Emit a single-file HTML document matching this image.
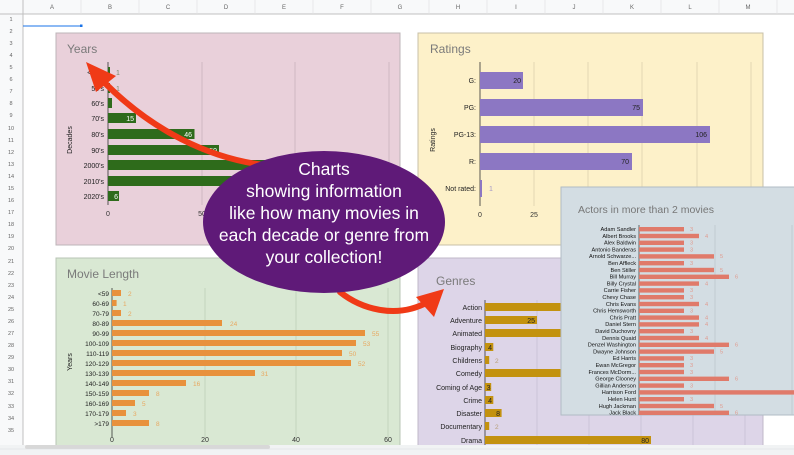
<!DOCTYPE html>
<html><head><meta charset="utf-8"><style>
html,body{margin:0;padding:0;width:794px;height:455px;overflow:hidden;background:#fff}
svg{display:block;font-family:"Liberation Sans",sans-serif}
</style></head><body>
<svg width="794" height="455" viewBox="0 0 794 455">
<rect x="0" y="0" width="794" height="14" fill="#f8f9fa"/>
<rect x="0" y="0" width="23" height="455" fill="#f8f9fa"/>
<line x1="0" y1="14" x2="794" y2="14" stroke="#c0c0c0" stroke-width="1"/>
<line x1="23" y1="0" x2="23" y2="455" stroke="#c0c0c0" stroke-width="1"/>
<g stroke="#e2e2e2" stroke-width="0.7">
<line x1="81" y1="0" x2="81" y2="14"/><line x1="139" y1="0" x2="139" y2="14"/><line x1="197" y1="0" x2="197" y2="14"/><line x1="255" y1="0" x2="255" y2="14"/><line x1="313" y1="0" x2="313" y2="14"/><line x1="371" y1="0" x2="371" y2="14"/><line x1="429" y1="0" x2="429" y2="14"/><line x1="487" y1="0" x2="487" y2="14"/><line x1="545" y1="0" x2="545" y2="14"/><line x1="603" y1="0" x2="603" y2="14"/><line x1="661" y1="0" x2="661" y2="14"/><line x1="719" y1="0" x2="719" y2="14"/><line x1="777" y1="0" x2="777" y2="14"/>
</g>
<g font-size="6" fill="#666" text-anchor="middle">
<text x="52" y="9">A</text><text x="110" y="9">B</text><text x="168" y="9">C</text><text x="226" y="9">D</text><text x="284" y="9">E</text><text x="342" y="9">F</text><text x="400" y="9">G</text><text x="458" y="9">H</text><text x="516" y="9">I</text><text x="574" y="9">J</text><text x="632" y="9">K</text><text x="690" y="9">L</text><text x="748" y="9">M</text>
</g>
<line x1="23" y1="26" x2="81" y2="26" stroke="#1a73e8" stroke-width="1"/>
<rect x="80" y="24.5" width="2.5" height="2.5" fill="#1a73e8"/>
<g font-size="5.5" fill="#666" text-anchor="middle">
<text x="11" y="21">1</text><text x="11" y="33">2</text><text x="11" y="45">3</text><text x="11" y="57">4</text><text x="11" y="69">5</text><text x="11" y="81">6</text><text x="11" y="93">7</text><text x="11" y="105">8</text><text x="11" y="117">9</text><text x="11" y="130">10</text><text x="11" y="142">11</text><text x="11" y="154">12</text><text x="11" y="166">13</text><text x="11" y="178">14</text><text x="11" y="190">15</text><text x="11" y="202">16</text><text x="11" y="214">17</text><text x="11" y="226">18</text><text x="11" y="238">19</text><text x="11" y="250">20</text><text x="11" y="263">21</text><text x="11" y="275">22</text><text x="11" y="287">23</text><text x="11" y="299">24</text><text x="11" y="311">25</text><text x="11" y="323">26</text><text x="11" y="335">27</text><text x="11" y="347">28</text><text x="11" y="359">29</text><text x="11" y="371">30</text><text x="11" y="383">31</text><text x="11" y="395">32</text><text x="11" y="408">33</text><text x="11" y="420">34</text><text x="11" y="432">35</text>
</g>

<!-- Years -->
<rect x="56" y="33" width="344" height="212" fill="#e9d0da" stroke="#bdb4b8"/>
<text x="67" y="53" font-size="12" fill="#7a7a7a">Years</text>
<g stroke="#c9b3bd" stroke-width="0.8"><line x1="202" y1="62" x2="202" y2="205"/><line x1="295" y1="62" x2="295" y2="205"/><line x1="389" y1="62" x2="389" y2="205"/></g>
<line x1="108" y1="62" x2="108" y2="205" stroke="#333" stroke-width="0.8"/>
<g fill="#2e6b1b">
<rect x="108" y="67" width="2" height="10"/><rect x="108" y="83" width="2" height="10"/><rect x="108" y="98" width="4" height="10"/><rect x="108" y="113" width="28" height="10"/><rect x="108" y="129" width="86.5" height="10"/><rect x="108" y="145" width="111" height="10"/><rect x="108" y="160" width="170" height="10"/><rect x="108" y="176" width="160" height="10"/><rect x="108" y="191" width="11" height="10"/>
</g>
<g font-size="7" fill="#222" text-anchor="end">
<text x="104" y="75">&lt;50's</text><text x="104" y="91">50's</text><text x="104" y="106">60's</text><text x="104" y="121">70's</text><text x="104" y="137">80's</text><text x="104" y="153">90's</text><text x="104" y="168">2000's</text><text x="104" y="184">2010's</text><text x="104" y="199">2020's</text>
</g>
<g font-size="7" fill="#fff" text-anchor="end"><text x="134" y="121">15</text><text x="192" y="137">46</text><text x="217" y="153">59</text><text x="118" y="199">6</text></g>
<g font-size="7" fill="#7a8c6a"><text x="116" y="75">1</text><text x="116" y="91">1</text></g>
<text transform="translate(72,140) rotate(-90)" font-size="7" fill="#222" text-anchor="middle">Decades</text>
<g font-size="7" fill="#333" text-anchor="middle"><text x="108" y="216">0</text><text x="202" y="216">50</text></g>

<!-- Ratings -->
<rect x="418" y="33" width="345" height="212" fill="#fdf1c9" stroke="#c8c0a8"/>
<text x="430" y="53" font-size="12" fill="#7a7a7a">Ratings</text>
<g stroke="#ddd2ae" stroke-width="0.8"><line x1="534" y1="62" x2="534" y2="206"/><line x1="588" y1="62" x2="588" y2="206"/><line x1="642" y1="62" x2="642" y2="206"/><line x1="697" y1="62" x2="697" y2="206"/><line x1="751" y1="62" x2="751" y2="206"/></g>
<line x1="480" y1="62" x2="480" y2="206" stroke="#333" stroke-width="0.8"/>
<g fill="#8c77c3">
<rect x="480" y="72" width="43" height="17"/><rect x="480" y="99" width="163" height="17"/><rect x="480" y="126" width="230" height="17"/><rect x="480" y="153" width="152" height="17"/><rect x="480" y="180" width="2" height="17"/>
</g>
<g font-size="7" fill="#222" text-anchor="end">
<text x="476" y="83">G:</text><text x="476" y="110">PG:</text><text x="476" y="137">PG-13:</text><text x="476" y="164">R:</text><text x="476" y="191">Not rated:</text>
<text x="521" y="83">20</text><text x="640" y="110">75</text><text x="707" y="137">106</text><text x="629" y="164">70</text>
</g>
<text x="489" y="191" font-size="7" fill="#a69ac8">1</text>
<text transform="translate(435,140) rotate(-90)" font-size="7" fill="#222" text-anchor="middle">Ratings</text>
<g font-size="7" fill="#333" text-anchor="middle"><text x="480" y="217">0</text><text x="534" y="217">25</text></g>

<!-- Movie Length -->
<rect x="56" y="258" width="344" height="190" fill="#d9e8d3" stroke="#b8c4b4"/>
<text x="67" y="278" font-size="12" fill="#7a7a7a">Movie Length</text>
<g stroke="#bfd0b8" stroke-width="0.8"><line x1="205" y1="288" x2="205" y2="437"/><line x1="296" y1="288" x2="296" y2="437"/><line x1="388" y1="288" x2="388" y2="437"/></g>
<line x1="112" y1="288" x2="112" y2="437" stroke="#333" stroke-width="0.8"/>
<g fill="#e8913c">
<rect x="112" y="290" width="9" height="6"/><rect x="112" y="300" width="4.6" height="6"/><rect x="112" y="310" width="9" height="6"/><rect x="112" y="320" width="110" height="6"/><rect x="112" y="330" width="253" height="6"/><rect x="112" y="340" width="244" height="6"/><rect x="112" y="350" width="230" height="6"/><rect x="112" y="360" width="239" height="6"/><rect x="112" y="370" width="143" height="6"/><rect x="112" y="380" width="74" height="6"/><rect x="112" y="390" width="37" height="6"/><rect x="112" y="400" width="23" height="6"/><rect x="112" y="410" width="14" height="6"/><rect x="112" y="420" width="37" height="6"/>
</g>
<g font-size="6.5" fill="#222" text-anchor="end">
<text x="109" y="296">&lt;59</text><text x="109" y="306">60-69</text><text x="109" y="316">70-79</text><text x="109" y="326">80-89</text><text x="109" y="336">90-99</text><text x="109" y="346">100-109</text><text x="109" y="356">110-119</text><text x="109" y="366">120-129</text><text x="109" y="376">130-139</text><text x="109" y="386">140-149</text><text x="109" y="396">150-159</text><text x="109" y="406">160-169</text><text x="109" y="416">170-179</text><text x="109" y="426">&gt;179</text>
</g>
<g font-size="6.5" fill="#e8a860">
<text x="128" y="296">2</text><text x="123" y="306">1</text><text x="128" y="316">2</text><text x="230" y="326">24</text><text x="372" y="336">55</text><text x="363" y="346">53</text><text x="349" y="356">50</text><text x="358" y="366">52</text><text x="261" y="376">31</text><text x="193" y="386">16</text><text x="156" y="396">8</text><text x="142" y="406">5</text><text x="133" y="416">3</text><text x="156" y="426">8</text>
</g>
<text transform="translate(72,362) rotate(-90)" font-size="7" fill="#222" text-anchor="middle">Years</text>
<g font-size="7" fill="#333" text-anchor="middle"><text x="112" y="442">0</text><text x="205" y="442">20</text><text x="296" y="442">40</text><text x="388" y="442">60</text></g>

<!-- Genres -->
<rect x="418" y="258" width="345" height="190" fill="#ddd5e8" stroke="#c0b8c8"/>
<text x="436" y="285" font-size="12" fill="#7a7a7a">Genres</text>
<g stroke="#c8c0d4" stroke-width="0.8"><line x1="537" y1="300" x2="537" y2="448"/><line x1="589" y1="300" x2="589" y2="448"/><line x1="641" y1="300" x2="641" y2="448"/><line x1="693" y1="300" x2="693" y2="448"/><line x1="745" y1="300" x2="745" y2="448"/></g>
<line x1="485" y1="300" x2="485" y2="448" stroke="#333" stroke-width="0.8"/>
<g fill="#c3920f">
<rect x="485" y="303" width="90" height="8"/><rect x="485" y="316" width="52" height="8"/><rect x="485" y="329" width="90" height="8"/><rect x="485" y="343" width="8.3" height="8"/><rect x="485" y="356" width="4.2" height="8"/><rect x="485" y="369" width="90" height="8"/><rect x="485" y="383" width="6.2" height="8"/><rect x="485" y="396" width="8.3" height="8"/><rect x="485" y="409" width="16.6" height="8"/><rect x="485" y="422" width="4.2" height="8"/><rect x="485" y="436" width="166" height="8"/>
</g>
<g font-size="7" fill="#222" text-anchor="end">
<text x="482" y="310">Action</text><text x="482" y="323">Adventure</text><text x="482" y="336">Animated</text><text x="482" y="350">Biography</text><text x="482" y="363">Childrens</text><text x="482" y="376">Comedy</text><text x="482" y="390">Coming of Age</text><text x="482" y="403">Crime</text><text x="482" y="416">Disaster</text><text x="482" y="429">Documentary</text><text x="482" y="443">Drama</text>
<text x="535" y="323">25</text><text x="492" y="350">4</text><text x="490.5" y="390">3</text><text x="492" y="403">4</text><text x="500" y="416">8</text><text x="649" y="443">80</text>
</g>
<g font-size="6.5" fill="#b8a07a"><text x="495" y="363">2</text><text x="495" y="429">2</text></g>

<!-- Actors -->
<rect x="561" y="187" width="240" height="228" fill="#d3dde3" stroke="#b0bcc4"/>
<text x="578" y="213" font-size="10.5" fill="#777">Actors in more than 2 movies</text>
<g stroke="#bcc8ce" stroke-width="0.8"><line x1="715" y1="225" x2="715" y2="415"/><line x1="792" y1="225" x2="792" y2="415"/></g>
<line x1="639" y1="225" x2="639" y2="415" stroke="#333" stroke-width="0.7"/>
<g font-size="5.6" fill="#111" text-anchor="end">
<text x="636" y="231">Adam Sandler</text><text x="636" y="237.8">Albert Brooks</text><text x="636" y="244.6">Alex Baldwin</text><text x="636" y="251.4">Antonio Banderas</text><text x="636" y="258.2">Arnold Schwarze...</text><text x="636" y="265">Ben Affleck</text><text x="636" y="271.8">Ben Stiller</text><text x="636" y="278.6">Bill Murray</text><text x="636" y="285.4">Billy Crystal</text><text x="636" y="292.2">Carrie Fisher</text><text x="636" y="299">Chevy Chase</text><text x="636" y="305.8">Chris Evans</text><text x="636" y="312.6">Chris Hemsworth</text><text x="636" y="319.4">Chris Pratt</text><text x="636" y="326.2">Daniel Stern</text><text x="636" y="333">David Duchovny</text><text x="636" y="339.8">Dennis Quaid</text><text x="636" y="346.6">Denzel Washington</text><text x="636" y="353.4">Dwayne Johnson</text><text x="636" y="360.2">Ed Harris</text><text x="636" y="367">Ewan McGregor</text><text x="636" y="373.8">Frances McDorm...</text><text x="636" y="380.6">George Clooney</text><text x="636" y="387.4">Gillian Anderson</text><text x="636" y="394.2">Harrison Ford</text><text x="636" y="401">Helen Hunt</text><text x="636" y="407.8">Hugh Jackman</text><text x="636" y="414.6">Jack Black</text>
</g>
<g fill="#e07a6a">
<rect x="639" y="227" width="45" height="4.4"/><rect x="639" y="233.8" width="60" height="4.4"/><rect x="639" y="240.6" width="45" height="4.4"/><rect x="639" y="247.4" width="45" height="4.4"/><rect x="639" y="254.2" width="75" height="4.4"/><rect x="639" y="261" width="45" height="4.4"/><rect x="639" y="267.8" width="75" height="4.4"/><rect x="639" y="274.6" width="90" height="4.4"/><rect x="639" y="281.4" width="60" height="4.4"/><rect x="639" y="288.2" width="45" height="4.4"/><rect x="639" y="295" width="45" height="4.4"/><rect x="639" y="301.8" width="60" height="4.4"/><rect x="639" y="308.6" width="45" height="4.4"/><rect x="639" y="315.4" width="60" height="4.4"/><rect x="639" y="322.2" width="60" height="4.4"/><rect x="639" y="329" width="45" height="4.4"/><rect x="639" y="335.8" width="60" height="4.4"/><rect x="639" y="342.6" width="90" height="4.4"/><rect x="639" y="349.4" width="75" height="4.4"/><rect x="639" y="356.2" width="45" height="4.4"/><rect x="639" y="363" width="45" height="4.4"/><rect x="639" y="369.8" width="45" height="4.4"/><rect x="639" y="376.6" width="90" height="4.4"/><rect x="639" y="383.4" width="45" height="4.4"/><rect x="639" y="390.2" width="160" height="4.4"/><rect x="639" y="397" width="45" height="4.4"/><rect x="639" y="403.8" width="75" height="4.4"/><rect x="639" y="410.6" width="90" height="4.4"/>
</g>
<g font-size="5.6" fill="#e09a8e">
<text x="690" y="231">3</text><text x="705" y="237.8">4</text><text x="690" y="244.6">3</text><text x="690" y="251.4">3</text><text x="720" y="258.2">5</text><text x="690" y="265">3</text><text x="720" y="271.8">5</text><text x="735" y="278.6">6</text><text x="705" y="285.4">4</text><text x="690" y="292.2">3</text><text x="690" y="299">3</text><text x="705" y="305.8">4</text><text x="690" y="312.6">3</text><text x="705" y="319.4">4</text><text x="705" y="326.2">4</text><text x="690" y="333">3</text><text x="705" y="339.8">4</text><text x="735" y="346.6">6</text><text x="720" y="353.4">5</text><text x="690" y="360.2">3</text><text x="690" y="367">3</text><text x="690" y="373.8">3</text><text x="735" y="380.6">6</text><text x="690" y="387.4">3</text><text x="690" y="401">3</text><text x="720" y="407.8">5</text><text x="735" y="414.6">6</text>
</g>
<rect x="764" y="415.5" width="30" height="30" fill="#fff"/>

<!-- bottom bar -->
<rect x="0" y="445" width="794" height="10" fill="#f1f3f4"/>
<rect x="25" y="445" width="245" height="4" rx="2" fill="#d8d8d8"/>
<line x1="0" y1="449" x2="794" y2="449" stroke="#dadce0" stroke-width="0.6"/>

<!-- arrows -->
<g fill="none" stroke="#f03a17" stroke-width="6" stroke-linecap="round">
<path d="M272,166 C210,160 150,130 100,78"/>
<path d="M340,292 C360,308 395,320 428,302"/>
</g>
<polygon points="86,62 116,76 96,92" fill="#f03a17"/>
<polygon points="444,289 416,297 434,317" fill="#f03a17"/>

<!-- ellipse -->
<ellipse cx="324" cy="222" rx="121" ry="71" fill="#5f1a78"/>
<g font-size="17.5" fill="#fff" text-anchor="middle">
<text x="324" y="175">Charts</text><text x="324" y="197">showing information</text><text x="324" y="219">like how many movies in</text><text x="324" y="241">each decade or genre from</text><text x="324" y="263">your collection!</text>
</g>
</svg>
</body></html>
